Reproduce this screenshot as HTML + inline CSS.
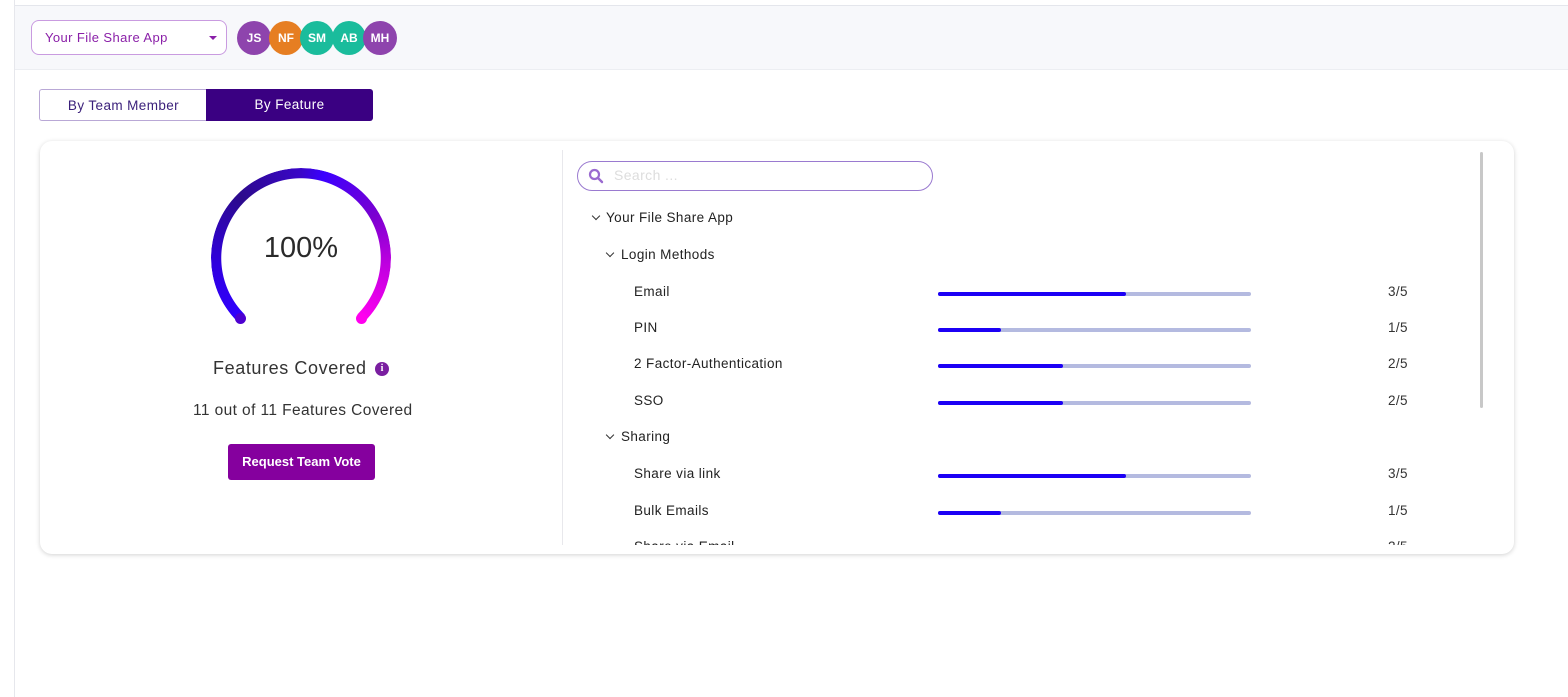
<!DOCTYPE html>
<html><head><style>
*{box-sizing:border-box;margin:0;padding:0}
body{width:1568px;height:697px;background:#fff;font-family:"Liberation Sans",sans-serif;position:relative;overflow:hidden;color:#222;letter-spacing:.4px}
.a{position:absolute}
.lb{left:14px;top:0;width:1px;height:697px;background:#e6e7ec}
.hdr{left:15px;top:5px;width:1553px;height:65px;background:#f7f8fb;border-top:1px solid #e4e6ec;border-bottom:1px solid #eceef2}
.sel{left:31px;top:20px;width:196px;height:35px;border:1px solid #c99be0;border-radius:8px;background:#fff;color:#8a1fa8;font-size:13px;padding:9px 0 0 13px}
.caret{left:209px;top:36px;width:0;height:0;border-left:4px solid transparent;border-right:4px solid transparent;border-top:4px solid #8a1fa8}
.av{width:34px;height:34px;border-radius:50%;top:21px;color:#fff;font-size:12px;font-weight:bold;text-align:center;line-height:34px;letter-spacing:0}
.tg{top:89px;height:32px;font-size:13.5px;text-align:center;line-height:31px}
.card{left:40px;top:141px;width:1474px;height:413px;border-radius:12px;background:#fff;box-shadow:0 1px 5px rgba(0,0,0,.18)}
.gauge{left:211px;top:168px;width:180px;height:180px;border-radius:50%;
background:conic-gradient(from 225deg,#2f00ff 0deg,#3000e0 40deg,#2c0a8c 90deg,#3a06c8 135deg,#3b00ff 150deg,#7a00d0 195deg,#c000e0 230deg,#ff00f0 270deg,transparent 270deg);
-webkit-mask:radial-gradient(circle,transparent 79.5px,#000 80px,#000 90px,transparent 90.5px);mask:radial-gradient(circle,transparent 79.5px,#000 80px,#000 90px,transparent 90.5px)}
.cap{width:11px;height:11px;border-radius:50%}
.t{font-size:13.5px;color:#222}
.bar{left:938px;width:313px;height:4px;border-radius:2px;background:#b4bae0}
.bar i{display:block;height:4px;border-radius:2px;background:#1c00f5}
.fr{left:1388px;font-size:13.5px;color:#333}
.chev{width:6px;height:6px;border-right:1.5px solid #333;border-bottom:1.5px solid #333;transform:rotate(45deg)}
</style></head><body>
<div class="a lb"></div>
<div class="a hdr"></div>
<div class="a sel">Your File Share App</div>
<div class="a caret"></div>
<div class="a av" style="left:237px;background:#8e44ad">JS</div>
<div class="a av" style="left:269px;background:#e67e22">NF</div>
<div class="a av" style="left:300px;background:#1abc9c">SM</div>
<div class="a av" style="left:332px;background:#1abc9c">AB</div>
<div class="a av" style="left:363px;background:#8e44ad">MH</div>
<div class="a tg" style="left:39px;width:168px;border:1px solid #b9a8d6;border-right:none;border-radius:3px 0 0 3px;color:#3a1f7a;background:#fff">By Team Member</div>
<div class="a tg" style="left:206px;width:167px;background:#3a0082;color:#fff;border-radius:0 3px 3px 0">By Feature</div>
<div class="a card"></div>
<div class="a gauge"></div>
<div class="a cap" style="left:235px;top:313px;background:#4d00d0"></div>
<div class="a cap" style="left:356px;top:313px;background:#ff00ee"></div>
<div class="a" style="left:201px;top:232px;width:200px;text-align:center;font-size:29px;color:#2a2a2a;letter-spacing:0">100%</div>
<div class="a" style="left:213px;top:358px;font-size:18px;color:#333;letter-spacing:.6px">Features Covered</div>
<div class="a" style="left:375px;top:362px;width:14px;height:14px;border-radius:50%;background:#7a1ea0;color:#fff;font-size:10px;font-weight:bold;text-align:center;line-height:14px;font-family:'Liberation Serif',serif;letter-spacing:0">i</div>
<div class="a" style="left:193px;top:402px;font-size:15.5px;color:#333;letter-spacing:.4px">11 out of 11 Features Covered</div>
<div class="a" style="left:228px;top:444px;width:147px;height:36px;background:#85009e;border-radius:3px;color:#fff;font-size:13px;font-weight:bold;text-align:center;line-height:36px;letter-spacing:0">Request Team Vote</div>
<div class="a" style="left:562px;top:150px;width:1px;height:395px;background:#e8e8ec"></div>
<div class="a" style="left:1480px;top:152px;width:3px;height:256px;background:#c8c8c8;border-radius:2px"></div>
<div class="a" style="left:577px;top:161px;width:356px;height:30px;border:1px solid #9a7ad0;border-radius:15px"></div>
<svg class="a" style="left:588px;top:168px" width="16" height="16" viewBox="0 0 16 16"><circle cx="6.5" cy="6.5" r="4.5" fill="none" stroke="#9a6ad0" stroke-width="2.2"/><path d="M10 10l4 4" stroke="#9a6ad0" stroke-width="2.4" stroke-linecap="round"/></svg>
<div class="a" style="left:614px;top:167px;font-size:14px;color:#ddd">Search ...</div>
<div class="a chev" style="left:593px;top:213px"></div>
<div class="a t" style="left:606px;top:210px">Your File Share App</div>
<div class="a chev" style="left:607px;top:250px"></div>
<div class="a t" style="left:621px;top:247px">Login Methods</div>
<div class="a t" style="left:634px;top:284px">Email</div>
<div class="a bar" style="top:292px"><i style="width:188px"></i></div><div class="a fr" style="top:284px">3/5</div>
<div class="a t" style="left:634px;top:320px">PIN</div>
<div class="a bar" style="top:328px"><i style="width:63px"></i></div><div class="a fr" style="top:320px">1/5</div>
<div class="a t" style="left:634px;top:356px">2 Factor-Authentication</div>
<div class="a bar" style="top:364px"><i style="width:125px"></i></div><div class="a fr" style="top:356px">2/5</div>
<div class="a t" style="left:634px;top:393px">SSO</div>
<div class="a bar" style="top:401px"><i style="width:125px"></i></div><div class="a fr" style="top:393px">2/5</div>
<div class="a chev" style="left:607px;top:432px"></div>
<div class="a t" style="left:621px;top:429px">Sharing</div>
<div class="a t" style="left:634px;top:466px">Share via link</div>
<div class="a bar" style="top:474px"><i style="width:188px"></i></div><div class="a fr" style="top:466px">3/5</div>
<div class="a t" style="left:634px;top:503px">Bulk Emails</div>
<div class="a bar" style="top:511px"><i style="width:63px"></i></div><div class="a fr" style="top:503px">1/5</div>
<div class="a" style="left:600px;top:539px;width:900px;height:6px;overflow:hidden"><div class="a t" style="left:34px;top:0">Share via Email</div><div class="a fr" style="left:788px;top:0">2/5</div></div>
</body></html>
